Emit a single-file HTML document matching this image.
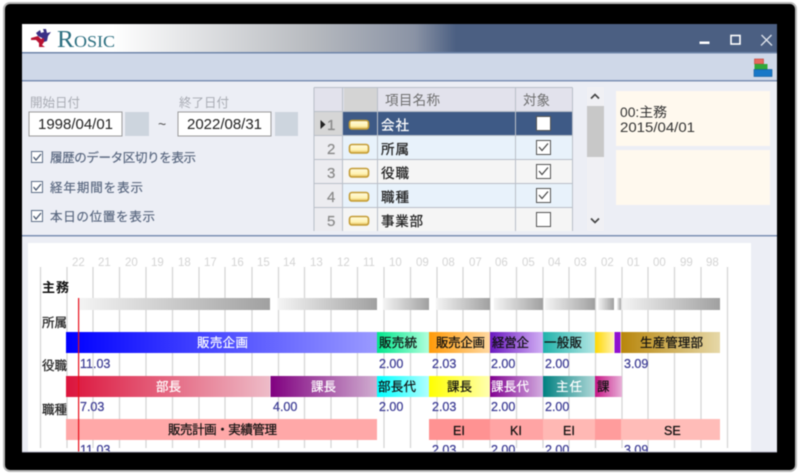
<!DOCTYPE html>
<html><head><meta charset="utf-8">
<style>
html,body{margin:0;padding:0;background:#fff;width:800px;height:475px;overflow:hidden}
svg{display:block;filter:blur(.55px)}
text{font-family:"Liberation Sans","Noto Sans CJK JP",sans-serif;font-size:13px;fill:#333}
.g{stroke:#d6d6d6;stroke-width:1.3}
.y{font-size:11.5px;fill:#d4d4d4}
.n{font-size:12.5px;fill:#3f3f96;stroke:#3f3f96;stroke-width:.25}
.l{font-size:12.5px;fill:#5a6880;stroke:#5a6880;stroke-width:.2}
.b{font-size:12.5px;fill:#111;stroke:#111;stroke-width:.25}
.w{font-size:12.5px;fill:#fff;stroke:#fff;stroke-width:.2}
.t{font-size:13.5px;fill:#222;stroke:#222;stroke-width:.25}
.rn{font-size:15px;fill:#8a8a8a;stroke:#8a8a8a;stroke-width:.2}
</style></head><body>
<svg width="800" height="475" viewBox="0 0 800 475" xmlns="http://www.w3.org/2000/svg">
<defs>
<linearGradient id="title" x1="0" x2="1" y1="0" y2="0"><stop offset="0" stop-color="#fff"/><stop offset=".12" stop-color="#fff"/><stop offset=".38" stop-color="#b8bbc0"/><stop offset=".52" stop-color="#8a93a5"/><stop offset=".575" stop-color="#4b5f82"/><stop offset="1" stop-color="#4b5f82"/></linearGradient>
<linearGradient id="gr"><stop offset="0" stop-color="#f4f4f4"/><stop offset="1" stop-color="#a0a0a0"/></linearGradient>
<linearGradient id="c1"><stop offset="0" stop-color="#0000ff"/><stop offset="1" stop-color="#9a9aff"/></linearGradient>
<linearGradient id="c2"><stop offset="0" stop-color="#00e68c"/><stop offset="1" stop-color="#b0ffdc"/></linearGradient>
<linearGradient id="c3"><stop offset="0" stop-color="#ff9a08"/><stop offset="1" stop-color="#ffd8a0"/></linearGradient>
<linearGradient id="c4"><stop offset="0" stop-color="#6a18c0"/><stop offset="1" stop-color="#d2b0f4"/></linearGradient>
<linearGradient id="c5"><stop offset="0" stop-color="#20b2aa"/><stop offset="1" stop-color="#b4e6e4"/></linearGradient>
<linearGradient id="c6"><stop offset="0" stop-color="#ffd700"/><stop offset="1" stop-color="#fff3b0"/></linearGradient>
<linearGradient id="c7"><stop offset="0" stop-color="#b8860b"/><stop offset="1" stop-color="#e6d8a8"/></linearGradient>
<linearGradient id="d1"><stop offset="0" stop-color="#dc143c"/><stop offset="1" stop-color="#eebcc8"/></linearGradient>
<linearGradient id="d2"><stop offset="0" stop-color="#800080"/><stop offset="1" stop-color="#d0aed0"/></linearGradient>
<linearGradient id="d3"><stop offset="0" stop-color="#00ffff"/><stop offset="1" stop-color="#b0ffff"/></linearGradient>
<linearGradient id="d4"><stop offset="0" stop-color="#ffff00"/><stop offset="1" stop-color="#ffffb0"/></linearGradient>
<linearGradient id="d5"><stop offset="0" stop-color="#800090"/><stop offset="1" stop-color="#d4aee0"/></linearGradient>
<linearGradient id="d6"><stop offset="0" stop-color="#008080"/><stop offset="1" stop-color="#b0d8d8"/></linearGradient>
<linearGradient id="d7"><stop offset="0" stop-color="#c71585"/><stop offset="1" stop-color="#e8b0d8"/></linearGradient>
<linearGradient id="pill" x1="0" x2="0" y1="0" y2="1"><stop offset="0" stop-color="#fffbe0"/><stop offset=".65" stop-color="#fff2b0"/><stop offset="1" stop-color="#e0b850"/></linearGradient>
</defs>

<!-- frame -->
<rect x="4" y="3" width="792" height="468" rx="6" fill="#000" stroke="#b8b8b8" stroke-width="2"/>

<!-- window -->
<rect x="22" y="24" width="755" height="428" fill="#eceef5"/>
<rect x="22" y="24" width="755" height="28" fill="url(#title)"/>
<rect x="22" y="52" width="755" height="1.5" fill="#6f86aa"/>
<rect x="22" y="53.5" width="755" height="27" fill="#cfd8e8"/>
<rect x="22" y="80" width="755" height="1.5" fill="#7c90b4"/>
<rect x="22" y="235" width="755" height="1.5" fill="#7c90b4"/>

<!-- logo -->
<path d="M36 33l4-3 1 3 3-1-1-3 3 0 1 4 4-1-3 4-1 5-3 1-2-4-4-2z" fill="#3a2f86"/>
<path d="M31 38l7-2 3 3 3-1 0 4-2 3 3 2-6 0 0-4-3-3-5 0z" fill="#b81232"/>
<text x="57" y="47" style="font-family:'Liberation Serif',serif;font-size:24px;font-variant:small-caps;fill:#2c6f80" textLength="58" lengthAdjust="spacingAndGlyphs">Rosic</text>

<!-- window buttons -->
<rect x="699.5" y="41.5" width="10" height="2.5" fill="#fff"/>
<rect x="731" y="35.5" width="9" height="8.5" fill="none" stroke="#fff" stroke-width="1.6"/>
<path d="M761.5 35l10.500 10.500M771.500 35l-10.500 10.500" stroke="#dfe4ec" stroke-width="1.300" fill="none"/>

<!-- toolbar icon -->
<rect x="754.500" y="59" width="9" height="5" fill="#e8685e" stroke="#c04030" stroke-width=".6"/>
<rect x="754.500" y="64" width="13" height="5.500" fill="#30a838"/>
<rect x="754" y="69.500" width="18" height="7" fill="#1878c8" stroke="#105a98" stroke-width=".6"/>

<!-- left form -->
<text x="30" y="107" style="font-size:12.500px;fill:#a8abb3" textLength="50">開始日付</text>
<text x="179" y="107" style="font-size:12.500px;fill:#a8abb3" textLength="50">終了日付</text>
<rect x="29" y="112" width="93" height="24" fill="#fff" stroke="#9a9a9a"/>
<rect x="178" y="112" width="93" height="24" fill="#fff" stroke="#9a9a9a"/>
<rect x="125" y="112" width="24" height="24" fill="#cdd5de"/>
<rect x="275" y="112" width="23" height="24" fill="#cdd5de"/>
<text x="38" y="129" style="font-size:15px;fill:#222" textLength="75" lengthAdjust="spacingAndGlyphs">1998/04/01</text>
<text x="187" y="129" style="font-size:15px;fill:#222" textLength="75" lengthAdjust="spacingAndGlyphs">2022/08/31</text>
<text x="158" y="129" style="font-size:14px;fill:#555">~</text>

<g fill="#fff" stroke="#5f6f88" stroke-width="1">
<rect x="31.500" y="151.500" width="11" height="11"/>
<rect x="31.500" y="181.500" width="11" height="11"/>
<rect x="31.500" y="210.500" width="11" height="11"/>
</g>
<g fill="none" stroke="#47566e" stroke-width="1.300">
<path d="M33.500 157l2.500 3 5-6"/>
<path d="M33.500 187l2.500 3 5-6"/>
<path d="M33.500 216l2.500 3 5-6"/>
</g>
<text x="50" y="162" class="l" textLength="146">履歴のデータ区切りを表示</text>
<text x="50" y="192" class="l" textLength="93">経年期間を表示</text>
<text x="50" y="221" class="l" textLength="105">本日の位置を表示</text>

<!-- table -->
<rect x="314" y="87" width="259" height="144" fill="#f4f4f4"/>
<rect x="314" y="87.500" width="258" height="24" fill="#e2e2ec"/>
<rect x="344" y="88" width="33" height="23" fill="#d4d4d4"/>
<rect x="314" y="112" width="29" height="119" fill="#ececf0"/>
<rect x="314" y="112" width="29" height="23" fill="#d6d6d6"/>
<rect x="343" y="112" width="229" height="24" fill="#3e5a86"/>
<rect x="343" y="136" width="229" height="24" fill="#e8f2fb"/>
<rect x="343" y="160" width="229" height="24" fill="#f5f5f5"/>
<rect x="343" y="184" width="229" height="24" fill="#e8f2fb"/>
<rect x="343" y="208" width="229" height="23" fill="#f5f5f5"/>
<g stroke="#b9bfc8" stroke-width="1">
<path d="M314 87.500H572.500M314 111.500H572.500M314 135.500H572.500M314 159.500H572.500M314 183.500H572.500M314 207.500H572.500" fill="none"/>
<path d="M314 87.500V231M342.500 87.500V231M377.500 87.500V231M515.500 87.500V231M572.500 87.500V231" fill="none"/>
</g>
<text x="385" y="105" style="font-size:13.500px;fill:#6e6e6e" textLength="55">項目名称</text>
<text x="523" y="105" style="font-size:13.500px;fill:#6e6e6e" textLength="27">対象</text>

<path d="M320.500 120l5 4.500-5 4.500z" fill="#222"/>
<text x="327" y="130" class="rn">1</text>
<text x="327" y="154" class="rn">2</text>
<text x="327" y="178" class="rn">3</text>
<text x="327" y="202" class="rn">4</text>
<text x="327" y="226" class="rn">5</text>

<g fill="url(#pill)" stroke="#c49c34" stroke-width="1.600">
<rect x="349.500" y="120.500" width="19" height="8.500" rx="2.500"/>
<rect x="349.500" y="144.500" width="19" height="8.500" rx="2.500"/>
<rect x="349.500" y="168.500" width="19" height="8.500" rx="2.500"/>
<rect x="349.500" y="192.500" width="19" height="8.500" rx="2.500"/>
<rect x="349.500" y="216.500" width="19" height="8.500" rx="2.500"/>
</g>

<text x="381" y="130" class="t" style="fill:#fff;stroke:#fff" textLength="28">会社</text>
<text x="381" y="154" class="t" textLength="28">所属</text>
<text x="381" y="178" class="t" textLength="28">役職</text>
<text x="381" y="202" class="t" textLength="28">職種</text>
<text x="381" y="226" class="t" textLength="42">事業部</text>

<g fill="#fff" stroke="#555" stroke-width="1">
<rect x="536.500" y="116.500" width="14" height="14"/>
<rect x="536.500" y="140.500" width="14" height="14"/>
<rect x="536.500" y="164.500" width="14" height="14"/>
<rect x="536.500" y="188.500" width="14" height="14"/>
<rect x="536.500" y="212.500" width="14" height="14"/>
</g>
<g fill="none" stroke="#444" stroke-width="1.200">
<path d="M539 147l3 3.500 6-7"/>
<path d="M539 171l3 3.500 6-7"/>
<path d="M539 195l3 3.500 6-7"/>
</g>

<!-- scrollbar -->
<rect x="587" y="87" width="17" height="144" fill="#f0f0f4"/>
<rect x="587" y="106" width="17" height="51" fill="#c8c8c8"/>
<path d="M591 98.500l4-4 4 4M591 218.500l4 4 4-4" fill="none" stroke="#444" stroke-width="1.600"/>

<!-- notes -->
<rect x="616" y="91" width="154" height="55" fill="#fff9ee"/>
<rect x="616" y="150" width="154" height="55" fill="#fff9ee"/>
<text x="620" y="117" style="font-size:13.500px;fill:#333" textLength="47" lengthAdjust="spacingAndGlyphs">00:主務</text>
<text x="620" y="132" style="font-size:14px;fill:#333" textLength="75" lengthAdjust="spacingAndGlyphs">2015/04/01</text>

<!-- chart panel -->
<rect x="28" y="243" width="723" height="209" fill="#fff"/>

<!-- grid -->
<g class="g" fill="none">
<path d="M40.500 267V448M67 267V448M93 267V448M119.500 267V448M146 267V448M172.500 267V448M199 267V448M225 267V448M252 267V448M278.500 267V448M304.500 267V448M331 267V448M357.500 267V448M384 267V448M410.500 267V448M437 267V448M463 267V448M490 267V448M516.500 267V448M543 267V448M569 267V448M595.500 267V448M622 267V448M648 267V448M674.500 267V448M701 267V448M727.500 267V448"/>
</g>
<g class="y">
<text x="72" y="266" class="y">22</text><text x="98" y="266" class="y">21</text><text x="125" y="266" class="y">20</text><text x="151" y="266" class="y">19</text><text x="178" y="266" class="y">18</text><text x="204" y="266" class="y">17</text><text x="231" y="266" class="y">16</text><text x="257" y="266" class="y">15</text><text x="283" y="266" class="y">14</text><text x="310" y="266" class="y">13</text><text x="337" y="266" class="y">12</text><text x="363" y="266" class="y">11</text><text x="389" y="266" class="y">10</text><text x="416" y="266" class="y">09</text><text x="442" y="266" class="y">08</text><text x="469" y="266" class="y">07</text><text x="495" y="266" class="y">06</text><text x="522" y="266" class="y">05</text><text x="548" y="266" class="y">04</text><text x="574" y="266" class="y">03</text><text x="601" y="266" class="y">02</text><text x="627" y="266" class="y">01</text><text x="653" y="266" class="y">00</text><text x="680" y="266" class="y">99</text><text x="706" y="266" class="y">98</text>
</g>

<!-- row labels -->
<text x="42" y="292" style="font-size:13px;font-weight:700;fill:#111" textLength="27">主務</text>
<text x="42" y="327" class="t" style="font-size:12.500px" textLength="25">所属</text>
<text x="42" y="370" class="t" style="font-size:12.500px" textLength="25">役職</text>
<text x="42" y="414" class="t" style="font-size:12.500px" textLength="25">職種</text>

<!-- gray bars -->
<g fill="url(#gr)">
<rect x="78" y="298" width="192" height="12"/>
<rect x="278" y="298" width="99" height="12"/>
<rect x="383" y="298" width="46" height="12"/>
<rect x="436" y="298" width="54" height="12"/>
<rect x="494" y="298" width="49" height="12"/>
<rect x="545" y="298" width="50" height="12"/>
<rect x="598" y="298" width="16" height="12"/>
<rect x="617" y="298" width="4" height="12"/>
<rect x="622" y="298" width="98" height="12"/>
</g>

<!-- 所属 bars -->
<rect x="66" y="332" width="311" height="21" fill="url(#c1)"/>
<rect x="377" y="332" width="52" height="21" fill="url(#c2)"/>
<rect x="429" y="332" width="61" height="21" fill="url(#c3)"/>
<rect x="490" y="332" width="53" height="21" fill="url(#c4)"/>
<rect x="543" y="332" width="52" height="21" fill="url(#c5)"/>
<rect x="595" y="332" width="19" height="21" fill="url(#c6)"/>
<rect x="614.500" y="332" width="6" height="21" fill="#9010d0"/>
<rect x="621" y="332" width="99" height="21" fill="url(#c7)"/>
<text x="197" y="347" class="w" textLength="51">販売企画</text>
<text x="379" y="347" class="b" textLength="38">販売統</text>
<text x="436" y="347" class="b" textLength="49">販売企画</text>
<text x="492" y="347" class="b" textLength="37">経営企</text>
<text x="544" y="347" class="b" textLength="38">一般販</text>
<text x="640" y="347" class="b" textLength="63">生産管理部</text>

<text x="80" y="368" class="n">11.03</text>
<text x="379" y="368" class="n">2.00</text>
<text x="432" y="368" class="n">2.03</text>
<text x="491" y="368" class="n">2.00</text>
<text x="545" y="368" class="n">2.00</text>
<text x="624" y="368" class="n">3.09</text>

<!-- 役職 bars -->
<rect x="66" y="376" width="204" height="21" fill="url(#d1)"/>
<rect x="270.500" y="376" width="106.500" height="21" fill="url(#d2)"/>
<rect x="377" y="376" width="52" height="21" fill="url(#d3)"/>
<rect x="429" y="376" width="61" height="21" fill="url(#d4)"/>
<rect x="490" y="376" width="53" height="21" fill="url(#d5)"/>
<rect x="543" y="376" width="52" height="21" fill="url(#d6)"/>
<rect x="595" y="376" width="27" height="21" fill="url(#d7)"/>
<text x="156" y="391" class="w" textLength="25">部長</text>
<text x="311" y="391" class="w" textLength="25">課長</text>
<text x="378" y="391" class="b" textLength="38">部長代</text>
<text x="447" y="391" class="b" textLength="25">課長</text>
<text x="491" y="391" class="w" textLength="38">課長代</text>
<text x="556" y="391" class="w" textLength="26">主任</text>
<text x="597" y="391" class="b" textLength="13">課</text>

<text x="80" y="411" class="n">7.03</text>
<text x="273" y="411" class="n">4.00</text>
<text x="379" y="411" class="n">2.00</text>
<text x="432" y="411" class="n">2.03</text>
<text x="491" y="411" class="n">2.00</text>
<text x="545" y="411" class="n">2.00</text>

<!-- 職種 bars -->
<rect x="66" y="419" width="311" height="21" fill="#ffa8a8"/>
<rect x="429" y="419" width="61" height="21" fill="#ff9292"/>
<rect x="490" y="419" width="53" height="21" fill="#ffa4a4"/>
<rect x="543" y="419" width="52" height="21" fill="#ffb8b4"/>
<rect x="595" y="419" width="26" height="21" fill="#ff9c9c"/>
<rect x="621" y="419" width="99" height="21" fill="#ffbcb8"/>
<text x="168" y="434" class="b" textLength="109">販売計画・実績管理</text>
<text x="453" y="435" class="b">EI</text>
<text x="510" y="435" class="b">KI</text>
<text x="563" y="435" class="b">EI</text>
<text x="664" y="435" class="b">SE</text>

<text x="80" y="454" class="n">11.03</text>
<text x="432" y="454" class="n">2.03</text>
<text x="491" y="454" class="n">2.00</text>
<text x="545" y="454" class="n">2.00</text>
<text x="624" y="454" class="n">3.09</text>

<!-- today line -->
<rect x="78" y="298" width="1.200" height="154" fill="#e8101c"/>

<!-- bottom frame cover -->
<rect x="22" y="452" width="755" height="18" fill="#000"/>
<rect x="22" y="451.500" width="755" height="1" fill="#aab"/>
</svg>
</body></html>
